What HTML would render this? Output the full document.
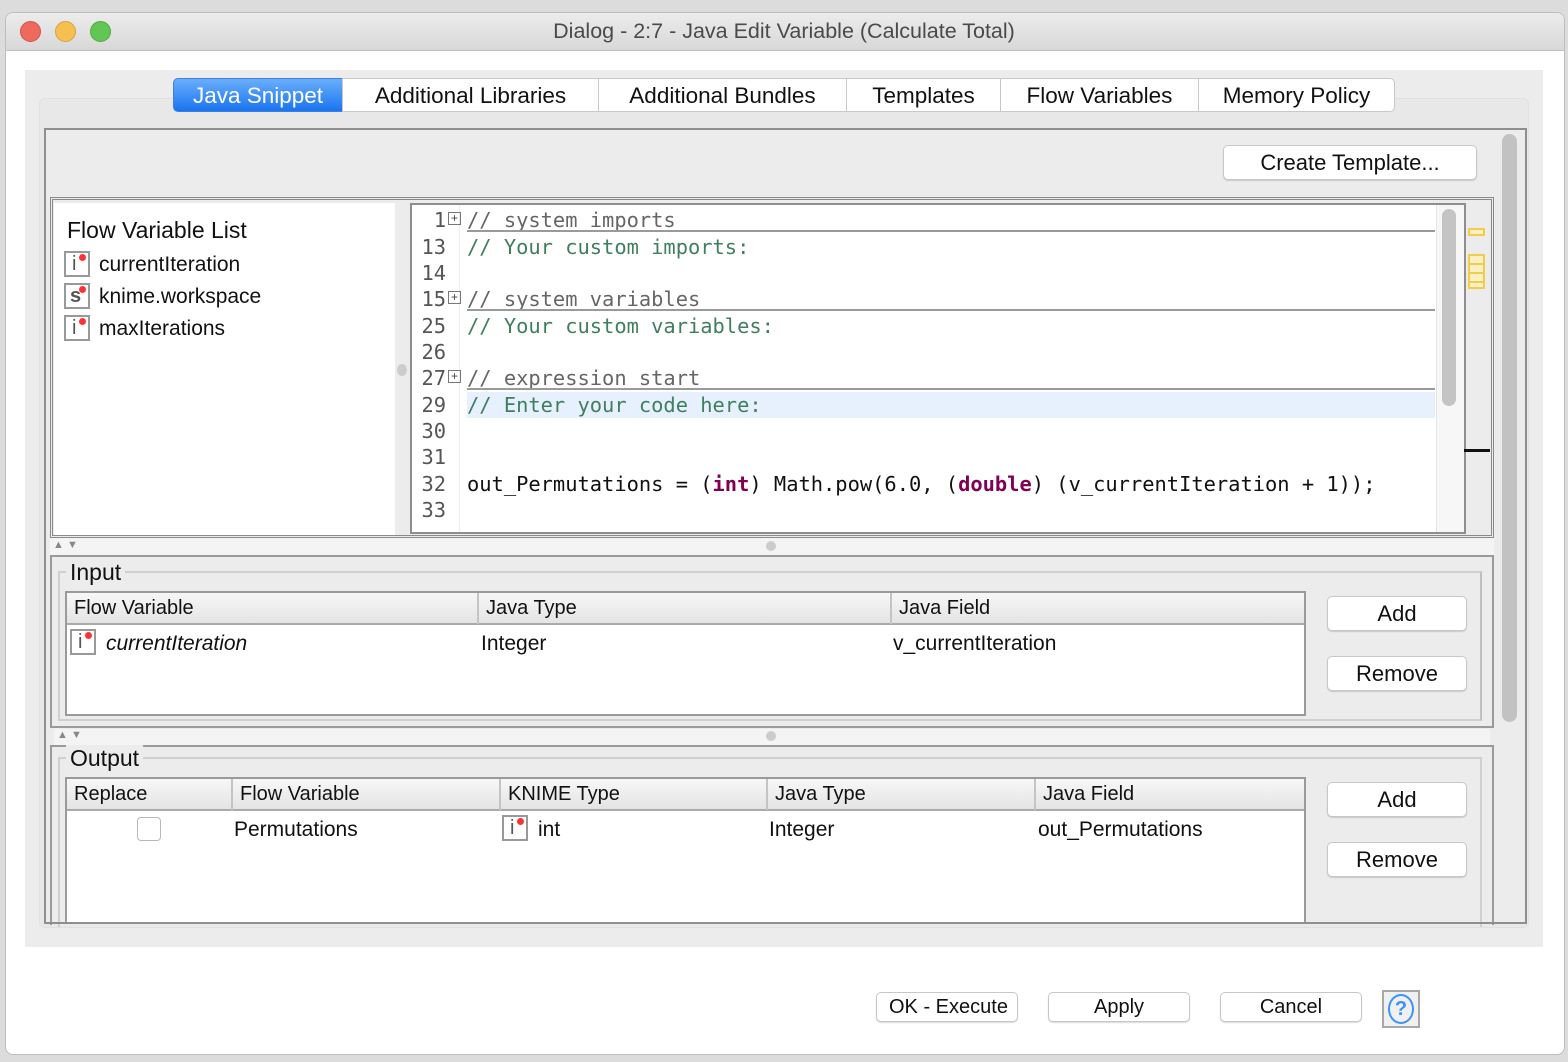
<!DOCTYPE html>
<html><head><meta charset="utf-8"><style>
*{box-sizing:border-box;margin:0;padding:0}
body{width:1568px;height:1062px;background:#dcdcdc;position:relative;overflow:hidden;font-family:"Liberation Sans",sans-serif;color:#111}
.a{position:absolute}
.t{position:absolute;white-space:nowrap}
.btn{position:absolute;background:#fff;border:1px solid #c8c8c8;border-radius:5px;box-shadow:0 1px 1px rgba(0,0,0,.15);text-align:center;font-size:22px}
.mono{font-family:"DejaVu Sans Mono","Liberation Mono",monospace;font-size:20.4px}
.ln{position:absolute;left:414px;width:32px;text-align:right;color:#555}
.code{position:absolute;left:467px;white-space:pre}
.cm{color:#3f7f5f}.gc{color:#666}
.kw{color:#7f0055;font-weight:bold}
.fold{position:absolute;left:448px;width:13px;height:13px;border:1px solid #777;font-size:12px;line-height:10px;text-align:center;color:#444;font-family:"Liberation Sans",sans-serif}
.hl{position:absolute;left:467px;width:968px;height:2px;background:#9a9a9a}
.ico{position:absolute;width:26px;height:26px;border:2px solid #999;background:#fff;font-size:20px;line-height:22px;color:#555;padding-left:6px}
.ico:after{content:"";position:absolute;right:2px;top:1px;width:7px;height:7px;border-radius:50%;background:#f33}
.hdr{position:absolute;height:32px;background:linear-gradient(#f7f7f7,#e4e4e4);border-bottom:2px solid #aaa;font-size:20px;line-height:31px}
.hdr span{position:absolute;top:0;height:31px;padding-left:7px;border-left:2px solid #c4c4c4}
.tab{position:absolute;top:78px;height:34px;background:#fff;border:1px solid #c8c8c8;font-size:22.5px;line-height:34px;text-align:center}
</style></head><body>
<div class="a" style="left:5px;top:12px;width:1560px;height:1043px;background:#fff;border-radius:8px;border:1px solid #bdbdbd;overflow:hidden">
 <div class="a" style="left:0;top:0;width:1560px;height:38px;background:linear-gradient(#ececec,#d8d8d8);border-bottom:1px solid #c0c0c0"></div>
</div>
<div class="a" style="left:20px;top:21px;width:21px;height:21px;border-radius:50%;background:#ee6a5e;border:1px solid #d35446"></div>
<div class="a" style="left:55px;top:21px;width:21px;height:21px;border-radius:50%;background:#f5c04f;border:1px solid #d6a243"></div>
<div class="a" style="left:90px;top:21px;width:21px;height:21px;border-radius:50%;background:#62c655;border:1px solid #52a842"></div>
<div class="t" style="left:0;width:1568px;text-align:center;top:19px;font-size:21.5px;color:#4a4a4a">Dialog - 2:7 - Java Edit Variable (Calculate Total)</div>

<div class="a" style="left:25px;top:70px;width:1518px;height:877px;background:#ececec"></div>
<div class="a" style="left:39px;top:98px;width:1490px;height:830px;background:#e8e8e8;border-radius:6px;border:1px solid #e0e0e0"></div>
<div class="tab" style="left:173px;width:170px;background:linear-gradient(#6aaefc,#1a74f0);color:#fff;border-color:#3a82e0;border-radius:5px 0 0 5px">Java Snippet</div>
<div class="tab" style="left:342px;width:257px">Additional Libraries</div>
<div class="tab" style="left:598px;width:249px">Additional Bundles</div>
<div class="tab" style="left:846px;width:155px">Templates</div>
<div class="tab" style="left:1000px;width:199px">Flow Variables</div>
<div class="tab" style="left:1198px;width:197px;border-radius:0 5px 5px 0">Memory Policy</div>

<div class="a" style="left:44px;top:128px;width:1483px;height:796px;border:2px solid #8e8e8e;background:#ececec"></div>
<div class="a" style="left:1502px;top:134px;width:15px;height:588px;border-radius:8px;background:#c2c2c2"></div>
<div class="btn" style="left:1223px;top:145px;width:254px;height:35px;line-height:33px">Create Template...</div>

<div class="a" style="left:50px;top:197px;width:1444px;height:341px;border:3px double #8a8a8a;background:#ececec"></div>
<div class="a" style="left:54px;top:203px;width:341px;height:332px;background:#fff"></div>
<div class="t" style="left:67px;top:217px;font-size:23px">Flow Variable List</div>
<div class="ico" style="left:64px;top:251px">i</div><div class="t" style="left:99px;top:253px;font-size:21px">currentIteration</div>
<div class="ico" style="left:64px;top:283px;padding-left:4px;font-weight:bold">s</div><div class="t" style="left:99px;top:285px;font-size:21px">knime.workspace</div>
<div class="ico" style="left:64px;top:315px">i</div><div class="t" style="left:99px;top:317px;font-size:21px">maxIterations</div>
<div class="a" style="left:397px;top:364px;width:10px;height:12px;border-radius:50%;background:#ccc"></div>

<div class="a" style="left:410px;top:203px;width:1056px;height:331px;border:2px solid #8e8e8e;background:#fff"></div>
<div class="a" style="left:412px;top:205px;width:48px;height:327px;background:#fff;border-right:1px solid #eee"></div>
<div class="a" style="left:467px;top:392px;width:968px;height:26px;background:#e7f1fd"></div>
<div class="a" style="left:1436px;top:205px;width:28px;height:327px;background:#f7f7f7;border-left:1px solid #e6e6e6"></div>
<div class="a" style="left:1442px;top:209px;width:14px;height:197px;border-radius:7px;background:#c4c4c4"></div>
<div class="a" style="left:1466px;top:205px;width:24px;height:330px;background:#ececec"></div>
<div class="a" style="left:1468px;top:228px;width:17px;height:8px;border:2px solid #f2cc4b;background:#fbf0c4"></div>
<div class="a" style="left:1468px;top:254px;width:17px;height:35px;border:2px solid #f2cc4b;background:repeating-linear-gradient(#fbf0c4 0 7px,#f2cc4b 7px 9px)"></div>
<div class="a" style="left:1464px;top:449px;width:26px;height:3px;background:#111"></div>

<div class="mono">
<div class="ln" style="top:208px">1</div><div class="fold" style="top:212px">+</div><div class="code gc" style="top:208px">// system imports</div><div class="hl" style="top:230px"></div>
<div class="ln" style="top:235px">13</div><div class="code cm" style="top:235px">// Your custom imports:</div>
<div class="ln" style="top:261px">14</div>
<div class="ln" style="top:287px">15</div><div class="fold" style="top:291px">+</div><div class="code gc" style="top:287px">// system variables</div><div class="hl" style="top:309px"></div>
<div class="ln" style="top:314px">25</div><div class="code cm" style="top:314px">// Your custom variables:</div>
<div class="ln" style="top:340px">26</div>
<div class="ln" style="top:366px">27</div><div class="fold" style="top:370px">+</div><div class="code gc" style="top:366px">// expression start</div><div class="hl" style="top:388px"></div>
<div class="ln" style="top:393px">29</div><div class="code cm" style="top:393px">// Enter your code here:</div>
<div class="ln" style="top:419px">30</div>
<div class="ln" style="top:445px">31</div>
<div class="ln" style="top:472px">32</div><div class="code" style="top:472px">out_Permutations = (<span class="kw">int</span>) Math.pow(6.0, (<span class="kw">double</span>) (v_currentIteration + 1));</div>
<div class="ln" style="top:498px">33</div>
</div>

<div class="a" style="left:50px;top:538px;width:1444px;height:17px;background:#f4f4f4"></div>
<div class="t" style="left:53px;top:539px;font-size:11px;color:#888">▲ ▼</div>
<div class="a" style="left:766px;top:541px;width:10px;height:10px;border-radius:50%;background:#ccc"></div>

<div class="a" style="left:50px;top:555px;width:1444px;height:173px;border:2px solid #9a9a9a;background:#ececec"></div>
<div class="a" style="left:58px;top:571px;width:1424px;height:150px;border:2px solid #d0d0d0;border-right-color:#c0c0c0"></div>
<div class="t" style="left:66px;top:559px;font-size:23px;background:#ececec;padding:0 4px">Input</div>
<div class="a" style="left:65px;top:591px;width:1241px;height:125px;border:2px solid #9a9a9a;background:#fff"></div>
<div class="hdr" style="left:67px;top:593px;width:1237px"><span style="left:0;border:0">Flow Variable</span><span style="left:410px">Java Type</span><span style="left:823px">Java Field</span></div>
<div class="ico" style="left:70px;top:629px">i</div>
<div class="t" style="left:106px;top:632px;font-size:21px;font-style:italic">currentIteration</div>
<div class="t" style="left:481px;top:632px;font-size:21px">Integer</div>
<div class="t" style="left:893px;top:632px;font-size:21px">v_currentIteration</div>
<div class="btn" style="left:1327px;top:596px;width:140px;height:35px;line-height:33px">Add</div>
<div class="btn" style="left:1327px;top:656px;width:140px;height:35px;line-height:33px">Remove</div>

<div class="a" style="left:54px;top:729px;width:1436px;height:16px;background:#f4f4f4"></div>
<div class="t" style="left:57px;top:729px;font-size:11px;color:#888">▲ ▼</div>
<div class="a" style="left:766px;top:731px;width:10px;height:10px;border-radius:50%;background:#ccc"></div>

<div class="a" style="left:50px;top:745px;width:1444px;height:180px;border:2px solid #9a9a9a;border-bottom:0;background:#ececec"></div>
<div class="a" style="left:58px;top:757px;width:1424px;height:170px;border:2px solid #d0d0d0;border-bottom:0"></div>
<div class="t" style="left:66px;top:745px;font-size:23px;background:#ececec;padding:0 4px">Output</div>
<div class="a" style="left:65px;top:777px;width:1241px;height:147px;border:2px solid #9a9a9a;background:#fff"></div>
<div class="hdr" style="left:67px;top:779px;width:1237px"><span style="left:0;border:0">Replace</span><span style="left:164px">Flow Variable</span><span style="left:432px">KNIME Type</span><span style="left:699px">Java Type</span><span style="left:967px">Java Field</span></div>
<div class="a" style="left:137px;top:817px;width:24px;height:24px;border:1px solid #b8b8b8;border-radius:4px;background:#fff"></div>
<div class="t" style="left:234px;top:818px;font-size:21px">Permutations</div>
<div class="ico" style="left:502px;top:815px">i</div>
<div class="t" style="left:538px;top:818px;font-size:21px">int</div>
<div class="t" style="left:769px;top:818px;font-size:21px">Integer</div>
<div class="t" style="left:1038px;top:818px;font-size:21px">out_Permutations</div>
<div class="btn" style="left:1327px;top:782px;width:140px;height:35px;line-height:33px">Add</div>
<div class="btn" style="left:1327px;top:842px;width:140px;height:35px;line-height:33px">Remove</div>
<div class="a" style="left:44px;top:922px;width:1483px;height:2px;background:#8e8e8e"></div>

<div class="btn" style="left:876px;top:992px;width:142px;height:30px;line-height:29px;font-size:20px;overflow:hidden;text-align:left;padding-left:12px">OK - Execute</div>
<div class="btn" style="left:1048px;top:992px;width:142px;height:30px;line-height:29px;font-size:20px">Apply</div>
<div class="btn" style="left:1220px;top:992px;width:142px;height:30px;line-height:29px;font-size:20px">Cancel</div>
<div class="a" style="left:1382px;top:990px;width:38px;height:38px;border:2px solid #a8a8a8;background:#f0f0f0"></div>
<div class="a" style="left:1388px;top:994px;width:26px;height:30px;border:2px solid #3b94f5;border-radius:50%;color:#3b94f5;font-size:20px;line-height:26px;text-align:center;font-weight:bold">?</div>
</body></html>
